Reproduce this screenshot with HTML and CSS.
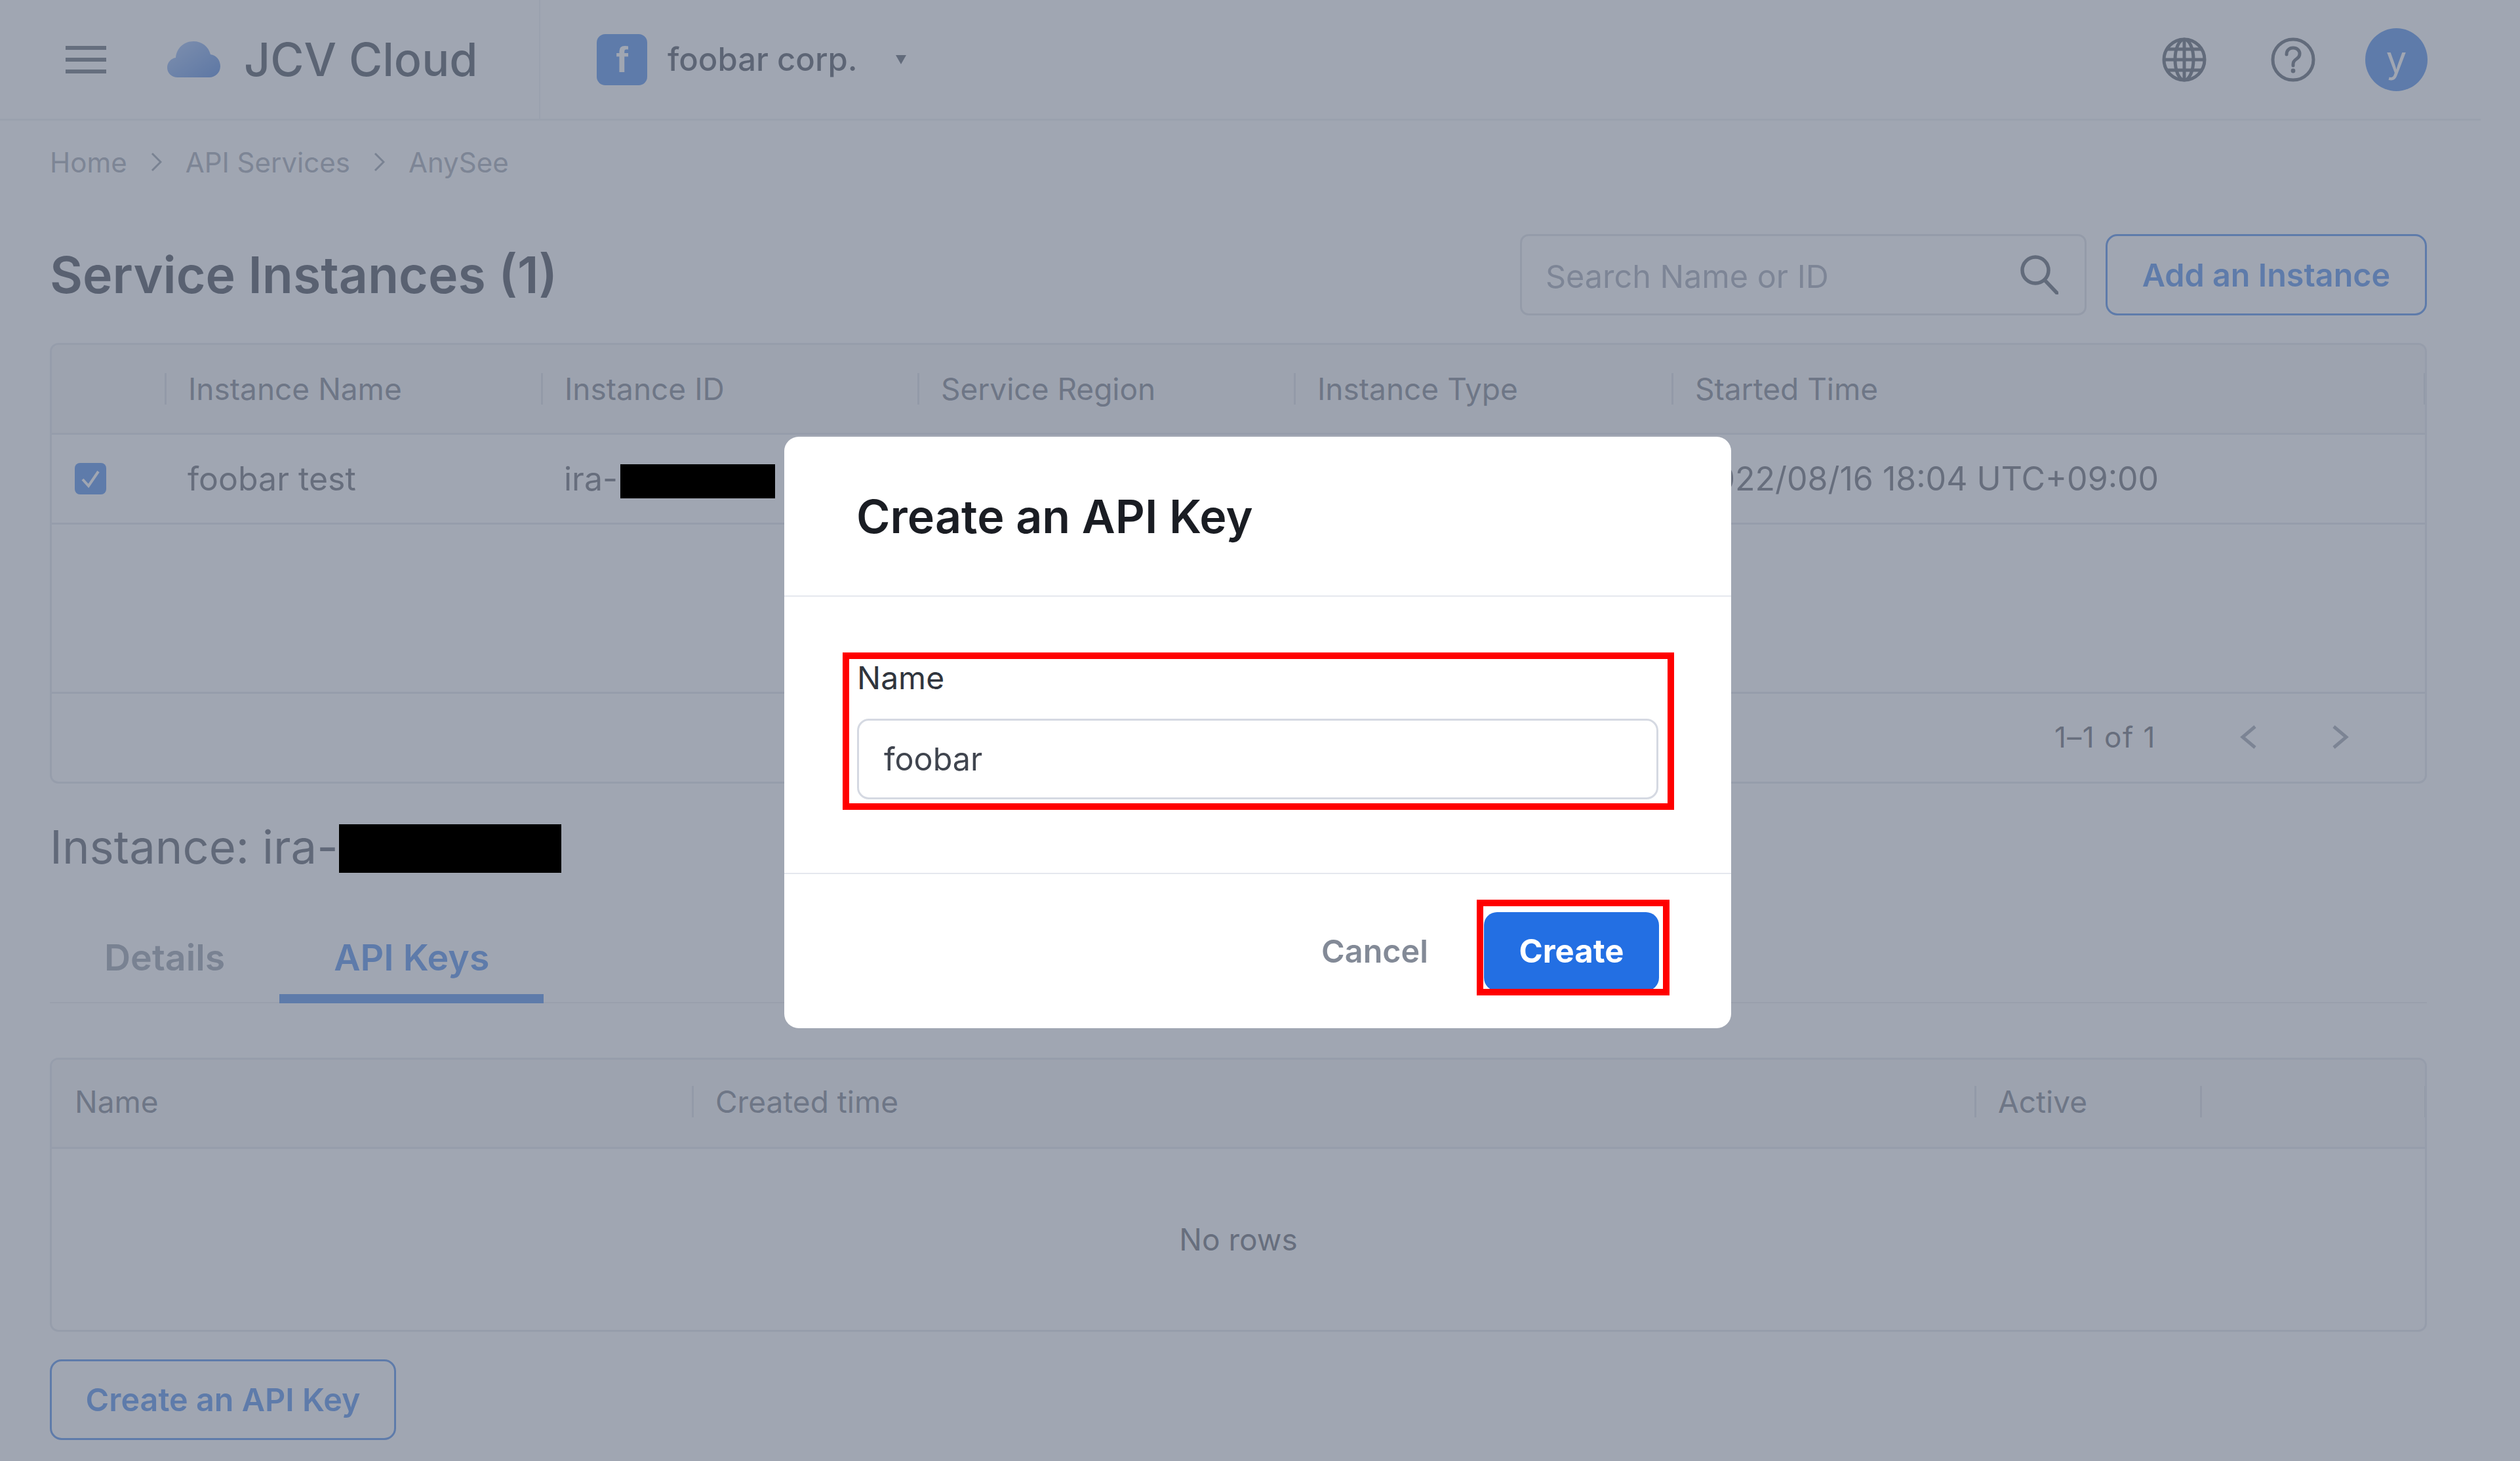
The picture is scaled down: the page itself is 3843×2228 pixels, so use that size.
FILE: index.html
```html
<!doctype html>
<html>
  <head>
    <meta charset="utf-8">
    <title>JCV Cloud</title>
    <link rel="stylesheet" href="styles.css">
  </head>
  <body>
    <div class="app">
      <header class="topbar">
        <div class="brand">
          <svg class="menu-icon" viewBox="0 0 62 42"><path d="M0 3h62M0 21h62M0 39h62" stroke="#3b4452" stroke-width="6" fill="none"/></svg>
          <svg class="cloud-icon" viewBox="0 0 81 55">
            <defs><linearGradient id="cloud" x1="0" y1="0" x2="1" y2="1"><stop offset="0" stop-color="#8fb4f2"/><stop offset="1" stop-color="#1f62d0"/></linearGradient></defs>
            <path d="M16 55C6 55 0 48 0 40c0-8 6-14 13-15C14 11 25 0 40 0c13 0 23 8 26 20 9 1 15 9 15 18 0 10-8 17-17 17z" fill="url(#cloud)"/>
          </svg>
          <span class="brand-name">JCV Cloud</span>
        </div>
        <div class="org">
          <span class="org-badge">f</span>
          <span class="org-name">foobar corp.</span>
          <span class="org-caret"></span>
        </div>
        <div class="top-actions">
          <svg class="top-icon" viewBox="0 0 68 68" fill="none" stroke="#2f3947" stroke-width="5">
            <circle cx="34" cy="34" r="31"/>
            <ellipse cx="34" cy="34" rx="14" ry="31"/>
            <path d="M34 3v62M3 34h62M8 18h52M8 50h52"/>
          </svg>
          <svg class="top-icon" viewBox="0 0 68 68" fill="none" stroke="#2f3947" stroke-width="5">
            <circle cx="34" cy="34" r="31"/>
            <path d="M24 26c0-6 4-10 10-10s10 4 10 9c0 4-2 6-5 8-3 2-5 4-5 8v2" stroke-linecap="round"/>
            <circle cx="34" cy="51" r="3.4" fill="#2f3947" stroke="none"/>
          </svg>
          <span class="avatar">y</span>
        </div>
      </header>

      <main class="content">
        <nav class="crumbs">
          <span>Home</span>
          <svg class="crumb-sep" viewBox="0 0 17 30"><path d="M2 2l13 13L2 28" fill="none" stroke="#7e8694" stroke-width="3"/></svg>
          <span>API Services</span>
          <svg class="crumb-sep" viewBox="0 0 17 30"><path d="M2 2l13 13L2 28" fill="none" stroke="#7e8694" stroke-width="3"/></svg>
          <span>AnySee</span>
        </nav>

        <div class="page-head">
          <h1 class="page-title">Service Instances (1)</h1>
          <div class="page-tools">
            <div class="search">
              <input class="search-input" placeholder="Search Name or ID">
              <svg class="search-icon" viewBox="0 0 58 60" fill="none" stroke="#2f3947" stroke-width="5.5"><circle cx="23" cy="23" r="20"/><path d="M37 38l19 20" stroke-linecap="round"/></svg>
            </div>
            <button class="btn-outline add-btn">Add an Instance</button>
          </div>
        </div>

        <section class="grid-table">
          <div class="row head cols-a">
            <div></div>
            <div><span class="th">Instance Name</span></div>
            <div><span class="th">Instance ID</span></div>
            <div><span class="th">Service Region</span></div>
            <div><span class="th">Instance Type</span></div>
            <div><span class="th">Started Time</span></div>
            <div><span class="th"></span></div>
          </div>
          <div class="row body-row cols-a">
            <div class="td">
              <span class="check"><svg viewBox="0 0 48 48"><path d="M12 25l9 10 15-22" fill="none" stroke="#fff" stroke-width="4"/></svg></span>
            </div>
            <div class="td">foobar test</div>
            <div class="td">ira-<span class="redact redact-id"></span></div>
            <div class="td"></div>
            <div class="td"></div>
            <div class="td">2022/08/16 18:04 UTC+09:00</div>
            <div></div>
          </div>
          <div class="filler"></div>
          <div class="pager">
            <span class="pager-text">1–1 of 1</span>
            <svg class="pager-arrow" viewBox="0 0 26 38"><path d="M23 3L4 19l19 16" fill="none" stroke="#858c99" stroke-width="5"/></svg>
            <svg class="pager-arrow" viewBox="0 0 26 38"><path d="M3 3l19 16L3 35" fill="none" stroke="#858c99" stroke-width="5"/></svg>
          </div>
        </section>

        <h2 class="instance-title">Instance: ira-<span class="redact redact-title"></span></h2>

        <div class="tabs">
          <div class="tab">Details</div>
          <div class="tab active">API Keys</div>
        </div>

        <section class="grid-table keys-table">
          <div class="row head cols-b">
            <div class="td">Name</div>
            <div><span class="th">Created time</span></div>
            <div><span class="th">Active</span></div>
            <div><span class="th"></span></div>
            <div><span class="th"></span></div>
          </div>
          <div class="no-rows">No rows</div>
        </section>

        <button class="btn-outline create-key">Create an API Key</button>
      </main>
    </div>

    <div class="backdrop">
      <div class="modal">
        <div class="modal-head">Create an API Key</div>
        <div class="modal-body">
          <label class="field-label">Name</label>
          <input class="field-input" value="foobar">
        </div>
        <div class="modal-foot">
          <button class="btn-cancel">Cancel</button>
          <button class="btn-create">Create</button>
        </div>
        <div class="mark mark-field"></div>
        <div class="mark mark-create"></div>
      </div>
    </div>
  </body>
</html>
```

FILE: styles.css
```css
* {
  box-sizing: border-box;
}
html, body {
  margin: 0;
  height: 2228px;
  overflow: hidden;
  background: #fff;
  font-family: Inter, "Liberation Sans", sans-serif;
  color: #3f4652;
}
button, input {
  font-family: inherit;
}

.app {
  width: 3783px;
}

/* top bar */
.topbar {
  display: flex;
  align-items: center;
  height: 184px;
  border-bottom: 3px solid #eceef2;
}
.brand {
  display: flex;
  align-items: center;
  width: 824px;
  height: 100%;
  padding-left: 100px;
  border-right: 2px solid #eceef2;
}
.menu-icon {
  width: 62px;
  height: 42px;
}
.cloud-icon {
  width: 81px;
  height: 55px;
  margin-left: 93px;
}
.brand-name {
  margin-left: 36px;
  font-size: 70px;
  font-weight: 500;
  color: #1a2230;
}
.org {
  display: flex;
  align-items: center;
  padding-left: 86px;
}
.org-badge {
  display: flex;
  align-items: center;
  justify-content: center;
  width: 77px;
  height: 78px;
  border-radius: 13px;
  background: #236fe3;
  color: #fff;
  font-family: "Liberation Sans", sans-serif;
  font-size: 56px;
  font-weight: 700;
}
.org-name {
  margin-left: 31px;
  font-size: 49px;
  font-weight: 500;
  color: #1f2733;
}
.org-caret {
  width: 0;
  height: 0;
  margin-left: 58px;
  border-left: 8px solid transparent;
  border-right: 8px solid transparent;
  border-top: 14px solid #2f3947;
}
.top-actions {
  display: flex;
  align-items: center;
  margin-left: auto;
  padding-right: 81px;
}
.top-icon {
  width: 68px;
  height: 68px;
  margin-right: 98px;
}
.top-icon + .avatar {
  margin-left: -22px;
}
.avatar {
  display: flex;
  align-items: center;
  justify-content: center;
  width: 95px;
  height: 96px;
  border-radius: 50%;
  background: #236fe3;
  color: #fff;
  font-size: 56px;
}

/* page */
.content {
  padding: 33px 82px 0 76px;
}
.crumbs {
  display: flex;
  align-items: center;
  gap: 36px;
  height: 60px;
  font-size: 42px;
  color: #8a919e;
}
.crumb-sep {
  width: 17px;
  height: 30px;
}
.page-head {
  display: flex;
  align-items: center;
  justify-content: space-between;
  height: 124px;
  margin-top: 80px;
}
.page-title {
  margin: 0;
  font-size: 77px;
  font-weight: 600;
  color: #111827;
}
.page-tools {
  display: flex;
  gap: 29px;
}
.search {
  display: flex;
  align-items: center;
  width: 864px;
  height: 124px;
  padding: 0 40px 0 36px;
  border: 3px solid #d8dbe2;
  border-radius: 13px;
}
.search-input {
  flex: 1;
  min-width: 0;
  padding: 5px 0 0;
  border: 0;
  outline: 0;
  background: none;
  font-size: 48.5px;
}
.search-input::placeholder {
  color: #8b92a0;
}
.search-icon {
  width: 58px;
  height: 60px;
}
.btn-outline {
  height: 123px;
  border: 3px solid #236fe3;
  border-radius: 18px;
  background: #fff;
  color: #236fe3;
  font-size: 48.5px;
  font-weight: 600;
}
.add-btn {
  width: 490px;
  height: 124px;
}

/* tables */
.grid-table {
  margin-top: 42px;
  border: 3px solid #dde0e6;
  border-radius: 13px;
  overflow: hidden;
}
.row {
  display: grid;
  align-items: center;
}
.cols-a {
  grid-template-columns: 172px 574px 574px 574px 576px 1147px 1fr;
}
.cols-b {
  grid-template-columns: 976px 1956px 344px 342px 1fr;
}
.head {
  height: 137px;
  border-bottom: 3px solid #dde0e6;
  background: #f3f4f6;
  font-size: 46px;
  color: #575e6b;
}
.th {
  display: block;
  min-height: 48px;
  padding-left: 33px;
  border-left: 3px solid #d3d6dd;
  line-height: 48px;
}
.td {
  padding-left: 35px;
  white-space: nowrap;
}
.body-row {
  height: 137px;
  border-bottom: 3px solid #dde0e6;
  font-size: 50px;
  color: #40454f;
}
.check {
  display: block;
  width: 48px;
  height: 48px;
  border-radius: 8px;
  background: #236fe3;
}
.check svg {
  display: block;
}
.redact {
  position: relative;
  z-index: 2;
  display: inline-block;
  background: #000;
  vertical-align: middle;
}
.redact-id {
  width: 236px;
  height: 52px;
  margin-left: 4px;
}
.filler {
  height: 258px;
  border-bottom: 3px solid #dde0e6;
}
.pager {
  display: flex;
  align-items: center;
  justify-content: flex-end;
  height: 134px;
  padding-bottom: 2px;
  padding-right: 116px;
  font-size: 44px;
  letter-spacing: 1.5px;
  color: #40454f;
}
.pager-arrow {
  width: 26px;
  height: 38px;
  margin-left: 114px;
}
.pager-arrow:nth-child(2) {
  margin-left: 128px;
}
.instance-title {
  height: 80px;
  margin: 57px 0 0;
  font-size: 70.5px;
  font-weight: 400;
  line-height: 80px;
  color: #2e3542;
}
.redact-title {
  width: 339px;
  height: 74px;
  margin: -8px 0 0 1px;
}

/* tabs */
.tabs {
  display: flex;
  height: 140px;
  margin-top: 58px;
  border-bottom: 2px solid #e6e8ec;
}
.tab {
  display: flex;
  align-items: center;
  padding: 0 83px;
  font-size: 55.5px;
  font-weight: 600;
  color: #7d8593;
}
.tab.active {
  height: 140px;
  padding-top: 12px;
  border-bottom: 14px solid #236fe3;
  border-radius: 4px 4px 0 0;
  color: #236fe3;
}

.keys-table {
  margin-top: 83px;
}
.keys-table .head {
  height: 136px;
  padding-bottom: 6px;
}
.no-rows {
  display: flex;
  align-items: center;
  justify-content: center;
  height: 276px;
  font-size: 46px;
  color: #40454f;
}
.create-key {
  display: block;
  width: 528px;
  margin-top: 42px;
}

/* dialog */
.backdrop {
  position: absolute;
  z-index: 1;
  inset: 0;
  background: rgba(119, 128, 145, .7);
}
.modal {
  position: absolute;
  left: 1196px;
  top: 666px;
  width: 1444px;
  height: 902px;
  border-radius: 22px;
  background: #fff;
}
.modal-head {
  display: flex;
  align-items: center;
  height: 244px;
  padding-left: 110px;
  border-bottom: 2px solid #e5e8ee;
  font-size: 70px;
  font-weight: 600;
  color: #1a1d23;
}
.modal-body {
  height: 423px;
  padding: 94px 111px 0;
  border-bottom: 2px solid #e5e8ee;
}
.field-label {
  display: block;
  height: 60px;
  font-size: 48px;
  line-height: 60px;
  color: #30353d;
}
.field-input {
  display: block;
  width: 100%;
  height: 123px;
  margin-top: 32px;
  padding: 0 38px;
  border: 3px solid #d5d9e2;
  border-radius: 18px;
  outline: 0;
  font-size: 48.5px;
  color: #40454f;
}
.modal-foot {
  display: flex;
  align-items: center;
  justify-content: flex-end;
  gap: 85px;
  height: 235px;
  padding-right: 110px;
}
.btn-cancel {
  padding: 0;
  border: 0;
  background: none;
  font-size: 48.5px;
  font-weight: 600;
  color: #838a97;
}
.btn-create {
  width: 267px;
  height: 120px;
  border: 0;
  border-radius: 20px;
  background: #236fe3;
  color: #fff;
  font-size: 49px;
  font-weight: 700;
}
.mark {
  position: absolute;
  border: 10px solid #f00;
}
.mark-field {
  left: 89px;
  top: 329px;
  width: 1268px;
  height: 240px;
}
.mark-create {
  left: 1056px;
  top: 706px;
  width: 294px;
  height: 146px;
}
```
